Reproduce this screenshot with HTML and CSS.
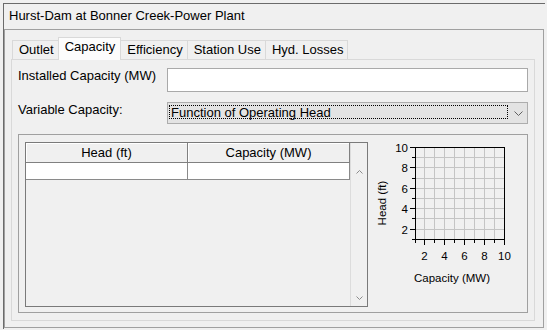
FILE: index.html
```html
<!DOCTYPE html>
<html>
<head>
    <link rel="stylesheet" href="styles.css">
</head>
<body>
    <div class="window">
        <div class="title">Hurst-Dam at Bonner Creek-Power Plant</div>
        <div class="panel">
            <div class="tabs">
                <div class="tab">Outlet</div>
                <div class="tab selected">Capacity</div>
                <div class="tab">Efficiency</div>
                <div class="tab">Station Use</div>
                <div class="tab">Hyd. Losses</div>
            </div>
            <div class="tab-body">
                <div class="form-row">
                    <label class="field-label">Installed Capacity (MW)</label>
                    <input type="text" class="text-input">
                </div>
                <div class="form-row combo-row">
                    <label class="field-label">Variable Capacity:</label>
                    <div class="combo">
                        <span class="combo-value">Function of Operating Head</span>
                        <span class="combo-arrow">
                            <svg width="9" height="5" viewBox="0 0 9 5"><polyline points="0.5,0.5 4.5,4.5 8.5,0.5" fill="none" stroke="#606060" stroke-width="1"/></svg>
                        </span>
                    </div>
                </div>
                <div class="group-box">
                    <div class="table">
                        <div class="grid">
                            <div class="grid-header">
                                <div class="head-cell">Head (ft)</div>
                                <div class="head-cell">Capacity (MW)</div>
                            </div>
                            <div class="grid-row">
                                <div class="cell"></div>
                                <div class="cell"></div>
                            </div>
                        </div>
                        <div class="vscroll">
                            <div class="scroll-corner"></div>
                            <div class="scroll-btn">
                                <svg width="7" height="4" viewBox="0 0 7 4"><polyline points="0.5,3.5 3.5,0.5 6.5,3.5" fill="none" stroke="#8c8c8c" stroke-width="1"/></svg>
                            </div>
                            <div class="scroll-track"></div>
                            <div class="scroll-btn">
                                <svg width="7" height="4" viewBox="0 0 7 4"><polyline points="0.5,0.5 3.5,3.5 6.5,0.5" fill="none" stroke="#8c8c8c" stroke-width="1"/></svg>
                            </div>
                        </div>
                    </div>
                    <svg class="chart" width="145" height="150" viewBox="0 0 145 150">
                        <!-- grid -->
                        <g stroke="#c4c4c4" stroke-width="1" shape-rendering="crispEdges">
                            <line x1="49.5" y1="5" x2="49.5" y2="97"/>
                            <line x1="59.5" y1="5" x2="59.5" y2="97"/>
                            <line x1="69.5" y1="5" x2="69.5" y2="97"/>
                            <line x1="79.5" y1="5" x2="79.5" y2="97"/>
                            <line x1="89.5" y1="5" x2="89.5" y2="97"/>
                            <line x1="99.5" y1="5" x2="99.5" y2="97"/>
                            <line x1="109.5" y1="5" x2="109.5" y2="97"/>
                            <line x1="119.5" y1="5" x2="119.5" y2="97"/>
                            <line x1="40" y1="15.5" x2="129" y2="15.5"/>
                            <line x1="40" y1="25.5" x2="129" y2="25.5"/>
                            <line x1="40" y1="36.5" x2="129" y2="36.5"/>
                            <line x1="40" y1="46.5" x2="129" y2="46.5"/>
                            <line x1="40" y1="56.5" x2="129" y2="56.5"/>
                            <line x1="40" y1="66.5" x2="129" y2="66.5"/>
                            <line x1="40" y1="76.5" x2="129" y2="76.5"/>
                            <line x1="40" y1="87.5" x2="129" y2="87.5"/>
                        </g>
                        <rect x="40.5" y="5.5" width="89" height="92" fill="none" stroke="#000" shape-rendering="crispEdges"/>
                        <!-- ticks -->
                        <g stroke="#000" stroke-width="1" shape-rendering="crispEdges">
                            <line x1="35" y1="5.5" x2="40" y2="5.5"/>
                            <line x1="37" y1="15.5" x2="40" y2="15.5"/>
                            <line x1="35" y1="25.5" x2="40" y2="25.5"/>
                            <line x1="37" y1="36.5" x2="40" y2="36.5"/>
                            <line x1="35" y1="46.5" x2="40" y2="46.5"/>
                            <line x1="37" y1="56.5" x2="40" y2="56.5"/>
                            <line x1="35" y1="66.5" x2="40" y2="66.5"/>
                            <line x1="37" y1="76.5" x2="40" y2="76.5"/>
                            <line x1="35" y1="87.5" x2="40" y2="87.5"/>
                            <line x1="37" y1="97.5" x2="40" y2="97.5"/>
                            <line x1="40.5" y1="98" x2="40.5" y2="101"/>
                            <line x1="49.5" y1="98" x2="49.5" y2="103"/>
                            <line x1="59.5" y1="98" x2="59.5" y2="101"/>
                            <line x1="69.5" y1="98" x2="69.5" y2="103"/>
                            <line x1="79.5" y1="98" x2="79.5" y2="101"/>
                            <line x1="89.5" y1="98" x2="89.5" y2="103"/>
                            <line x1="99.5" y1="98" x2="99.5" y2="101"/>
                            <line x1="109.5" y1="98" x2="109.5" y2="103"/>
                            <line x1="119.5" y1="98" x2="119.5" y2="101"/>
                            <line x1="129.5" y1="98" x2="129.5" y2="103"/>
                        </g>
                        <g class="tick-label" text-anchor="end">
                            <text x="33" y="9.5">10</text>
                            <text x="33" y="30">8</text>
                            <text x="33" y="50.5">6</text>
                            <text x="33" y="70.5">4</text>
                            <text x="33" y="91.5">2</text>
                        </g>
                        <g class="tick-label" text-anchor="middle">
                            <text x="49.5" y="118">2</text>
                            <text x="69.5" y="118">4</text>
                            <text x="89.5" y="118">6</text>
                            <text x="109.5" y="118">8</text>
                            <text x="129.5" y="118">10</text>
                        </g>
                        <text class="axis-label" x="77" y="140" text-anchor="middle">Capacity (MW)</text>
                        <text class="axis-label" x="11" y="61" text-anchor="middle" transform="rotate(-90 11 61)">Head (ft)</text>
                    </svg>
                </div>
            </div>
        </div>
    </div>
</body>
</html>
```

FILE: styles.css
```css
body {
    margin: 0;
    background-color: #f0f0f0;
    font-family: "Liberation Sans", Arial, sans-serif;
    font-size: 13px;
    line-height: 15px;
    color: #000;
}

.window {
    margin: 3px 0 0 3px;
    width: 541px;
    padding-bottom: 1px;
    border-left: 1px solid #6b6b6b;
    border-top: 1px solid #6b6b6b;
}

.title {
    height: 15px;
    padding: 4px 0 6px 5px;
}

.panel {
    width: 524px;
    border: 1px solid #a0a0a0;
    padding: 7px 8px 6px 6px;
}

.tabs {
    display: flex;
    align-items: flex-end;
    padding-left: 1px;
}

.tab {
    border: 1px solid #d9d9d9;
    border-bottom: none;
    margin-left: -1px;
    padding: 1px 4px 2px 6px;
    background-color: #f0f0f0;
}

.tab:first-child {
    margin-left: 0;
}

.tab.selected {
    position: relative;
    z-index: 1;
    padding: 1px 5px 6px 6px;
    margin-bottom: -1px;
    background-color: #fcfcfc;
}

.tab-body {
    border: 1px solid #d9d9d9;
    padding: 8px 6px 7px 6px;
}

.form-row {
    display: flex;
    align-items: flex-start;
}

.combo-row {
    margin-top: 10px;
}

.field-label {
    width: 149px;
    flex-shrink: 0;
}

.text-input {
    flex: 1;
    height: 24px;
    box-sizing: border-box;
    margin: 0;
    border: 1px solid #a9a9a9;
    background-color: #fff;
}

.combo {
    flex: 1;
    display: flex;
    height: 22px;
    box-sizing: border-box;
    border: 1px solid #adadad;
    background-color: #e3e3e3;
}

.combo-value {
    flex: 1;
    margin: 2px 0 4px 1px;
    padding-left: 1px;
    border: 1px dotted #000;
    line-height: 14px;
}

.combo-arrow {
    width: 18px;
    display: flex;
    align-items: center;
    justify-content: center;
    padding-left: 1px;
}

.combo-arrow svg {
    display: block;
}

.group-box {
    margin-top: 10px;
    border: 1px solid #a0a0a0;
    padding: 7px 6px 5px 6px;
    display: flex;
    align-items: flex-start;
}

.table {
    width: 341px;
    height: 163px;
    border: 1px solid #7a7a7a;
    display: flex;
}

.grid {
    width: 324px;
}

.grid-header,
.grid-row {
    display: flex;
}

.head-cell {
    width: 161px;
    padding: 2px 0 2px 0;
    height: 15px;
    border-right: 1px solid #808080;
    border-bottom: 1px solid #808080;
    box-shadow: inset 1px 1px 0 #fff;
    text-align: center;
}

.cell {
    width: 161px;
    height: 16px;
    border-right: 1px solid #8a8a8a;
    border-bottom: 1px solid #8a8a8a;
    background-color: #fff;
}

.vscroll {
    width: 16px;
    border-left: 1px solid #dcdcdc;
    display: flex;
    flex-direction: column;
}

.scroll-corner {
    height: 20px;
}

.scroll-btn {
    height: 17px;
    display: flex;
    align-items: center;
    justify-content: center;
}

.scroll-btn svg {
    display: block;
}

.scroll-track {
    flex: 1;
}

.chart {
    display: block;
    margin-left: 7px;
}

.tick-label,
.axis-label {
    font-family: "Liberation Sans", Arial, sans-serif;
    font-size: 11.5px;
    font-weight: normal;
    fill: #000;
}
```
